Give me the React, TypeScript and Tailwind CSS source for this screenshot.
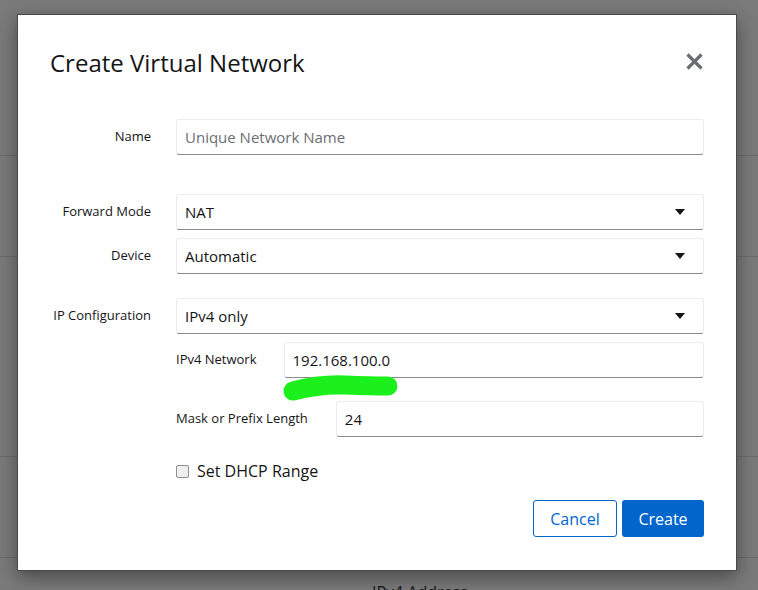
import React from "react";

const Caret = () => (
  <svg width="10" height="6" viewBox="0 0 10 6" className="shrink-0">
    <path d="M0 0 L10 0 L5 6 Z" fill="#151515" />
  </svg>
);

function Select({ value }: { value: string }) {
  return (
    <div className="flex h-[36px] items-center justify-between rounded-[3px] border border-[#ececec] border-b-[#8a8d90] bg-white pl-[8px] pr-[18px] text-[15px] text-[#151515]">
      <span>{value}</span>
      <Caret />
    </div>
  );
}

function TextInput({ value, placeholder }: { value?: string; placeholder?: string }) {
  return (
    <input
      readOnly
      value={value ?? ""}
      placeholder={placeholder}
      className="h-[36px] w-full rounded-[3px] border border-[#ececec] border-b-[#8a8d90] bg-white pl-[8px] text-[15px] text-[#151515] outline-none placeholder:text-[#6a6e73]"
    />
  );
}

function Row({ label, children, className = "" }: { label: string; children: React.ReactNode; className?: string }) {
  return (
    <div className={`grid grid-cols-[101px_1fr] items-center gap-x-[25px] ${className}`}>
      <label className="text-right text-[13px] text-[#151515]">{label}</label>
      {children}
    </div>
  );
}

export default function App() {
  return (
    <div className="relative h-[590px] w-[758px] overflow-hidden bg-[#7a7a7a] font-['Open_Sans',sans-serif]">
      {/* page behind the backdrop */}
      <div className="flex flex-col">
        <div className="h-[156px] border-b border-[#6a6a6a]" />
        <div className="h-[101px] border-b border-[#6a6a6a]" />
        <div className="h-[200px] border-b border-[#6a6a6a]" />
        <div className="h-[101px] border-b border-[#6a6a6a]" />
        <div className="pl-[372px] pt-[24px] text-[16px] leading-[20px] text-[#161616]">IPv4 Address</div>
      </div>

      {/* modal */}
      <div className="absolute left-[18px] top-[15px] h-[555px] w-[718px] bg-white px-[32px] pt-[33px] shadow-[0_0_0_1px_#4a4a4a,0_6px_18px_rgba(0,0,0,0.45)]">
        <div className="flex items-center justify-between">
          <h1 className="text-[24px] leading-[30px] text-[#151515]">Create Virtual Network</h1>
          <button className="-mt-[4px] flex h-[20px] w-[20px] items-center justify-center" aria-label="Close">
            <svg width="17" height="17" viewBox="0 0 17 17">
              <path d="M1.5 1.5 L15.5 15.5 M15.5 1.5 L1.5 15.5" stroke="#6a6e73" strokeWidth="3.2" />
            </svg>
          </button>
        </div>

        <div className="mt-[41px] flex flex-col">
          <Row label="Name">
            <TextInput placeholder="Unique Network Name" />
          </Row>
          <Row label="Forward Mode" className="mt-[39px]">
            <Select value="NAT" />
          </Row>
          <Row label="Device" className="mt-[8px]">
            <Select value="Automatic" />
          </Row>
          <Row label="IP Configuration" className="mt-[24px]">
            <Select value="IPv4 only" />
          </Row>

          <div className="ml-[126px] flex flex-col">
            <div className="mt-[8px] flex items-center gap-[27px]">
              <span className="whitespace-nowrap text-[13px] text-[#151515]">IPv4 Network</span>
              <TextInput value="192.168.100.0" />
            </div>
            <div className="mt-[23px] flex items-center gap-[28px]">
              <span className="whitespace-nowrap text-[13px] text-[#151515]">Mask or Prefix Length</span>
              <TextInput value="24" />
            </div>
            <label className="mt-[24px] flex h-[20px] items-center gap-[8px] text-[16px] text-[#151515]">
              <input
                type="checkbox"
                className="h-[13px] w-[13px] appearance-none rounded-[2px] border border-[#8f8f8f] bg-[#efefef]"
              />
              Set DHCP Range
            </label>
          </div>

          <div className="mt-[19px] flex justify-end gap-[5px]">
            <button className="h-[37px] w-[84px] rounded-[3px] border border-[#0066cc] bg-white text-[16px] text-[#0066cc]">
              Cancel
            </button>
            <button className="h-[37px] w-[82px] rounded-[3px] bg-[#0066cc] text-[16px] text-white">Create</button>
          </div>
        </div>
      </div>

      {/* green marker scribble over the screenshot */}
      <svg className="pointer-events-none absolute left-[278px] top-[366px]" width="126" height="44" viewBox="0 0 126 44">
        <path d="M15 25 Q 42 18 67 19 T 110 20" stroke="#1cf01c" strokeWidth="19" strokeLinecap="round" fill="none" />
      </svg>
    </div>
  );
}
